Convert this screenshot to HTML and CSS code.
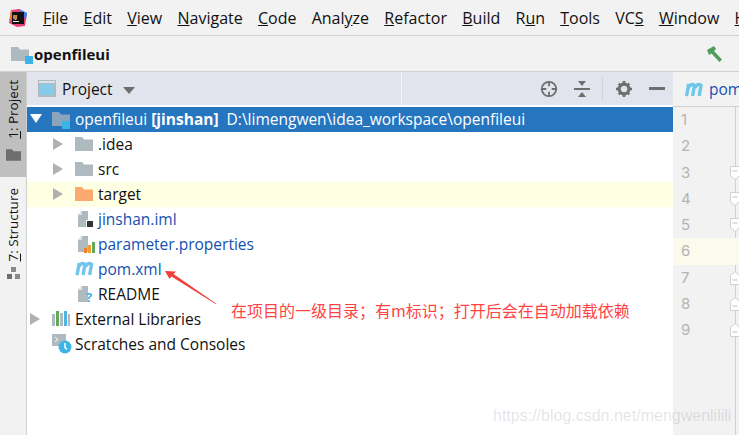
FILE: index.html
```html
<!DOCTYPE html>
<html lang="en">
<head>
  <meta charset="UTF-8">
  <title>openfileui</title>
  <link rel="stylesheet" href="styles.css">
</head>
<body>
  <svg class="sprite" width="0" height="0">
    <symbol id="folder" viewBox="0 0 18 16"><path d="M0 1h7l2 2.500h9V15H0z"/></symbol>
    <symbol id="file" viewBox="0 0 18 18"><path d="M1 5l4-4h6v16H1z" fill="#afb9c0"/><path d="M5 1v4H1z" fill="#dfe3e6"/></symbol>
    <symbol id="mvn" viewBox="0 0 20 16"><path d="M2 15L4.500 2M4 6Q7 1 10.500 3.500L8.500 15M11 6Q14 1 17.500 3.500L15.500 15" fill="none" stroke="#70c6ea" stroke-width="3.600"/></symbol>
    <symbol id="foldstart" viewBox="0 0 9 14"><path d="M.5.5h9v9l-4.500 4-4.500-4z" fill="#fff" stroke="#d0d0d0"/><path d="M2.500 5h5" stroke="#c0c0c0"/></symbol>
    <symbol id="foldend" viewBox="0 0 9 14"><path d="M.5 13.500h9v-9l-4.500-4-4.500 4z" fill="#fff" stroke="#d0d0d0"/><path d="M2.500 9h5" stroke="#c0c0c0"/></symbol>
  </svg>

  <div class="app">
    <div class="menubar">
      <svg class="logo" width="20" height="20" viewBox="0 0 20 20">
        <path d="M3 2l8-1 8 4-2 13-8 1-8-4z" fill="#e8407a"/>
        <path d="M11 1l8 4-1 7z" fill="#3f7fe8"/>
        <path d="M1 14l2-12 4 4z" fill="#f08030"/>
        <rect x="4" y="4" width="12" height="12" fill="#111"/>
        <rect x="5" y="13" width="6" height="1" fill="#eee"/>
        <text x="5" y="10.500" class="logotext">IJ</text>
      </svg>
      <nav class="menu">
        <span><u>F</u>ile</span>
        <span><u>E</u>dit</span>
        <span><u>V</u>iew</span>
        <span><u>N</u>avigate</span>
        <span><u>C</u>ode</span>
        <span>Anal<u>y</u>ze</span>
        <span><u>R</u>efactor</span>
        <span><u>B</u>uild</span>
        <span>R<u>u</u>n</span>
        <span><u>T</u>ools</span>
        <span>VC<u>S</u></span>
        <span><u>W</u>indow</span>
        <span><u>H</u>elp</span>
      </nav>
    </div>

    <div class="navbar">
      <span class="iconbox navfolder">
        <svg class="grey" width="18" height="16"><use href="#folder"/></svg>
        <i class="corner"></i>
      </span>
      <b>openfileui</b>
      <svg class="hammer" width="20" height="18" viewBox="0 0 18 18">
        <path d="M1 5L8 1l2 3-2 2 8 8.500-2.500 2.500-8-8.500-2.500 1.500z" fill="#4f9e5f"/>
      </svg>
    </div>

    <div class="main">
      <aside class="stripe">
        <div class="stripetab active">
          <span class="vtext"><u>1</u>: Project</span>
          <svg class="darkfolder" width="15" height="14"><use href="#folder"/></svg>
        </div>
        <div class="stripetab">
          <span class="vtext"><u>7</u>: Structure</span>
          <svg class="dots" width="13" height="12" viewBox="0 0 13 12">
            <rect x="4" y="0" width="5" height="5" fill="#8a8a8a"/>
            <rect x="0" y="7" width="5" height="5" fill="#6e6e6e"/>
            <rect x="8" y="7" width="5" height="5" fill="#8a8a8a"/>
          </svg>
        </div>
      </aside>

      <section class="project">
        <header class="projecthead">
          <div class="headleft">
            <svg class="viewicon" width="18" height="17" viewBox="0 0 18 17">
              <rect width="18" height="17" fill="#afb9c0"/>
              <rect x="1" y="1" width="16" height="2" fill="#dfe3e8"/>
              <rect x="2" y="4" width="14" height="11" fill="#86cce8"/>
            </svg>
            <span class="headtitle">Project</span>
            <i class="caret"></i>
          </div>
          <div class="headtools">
            <svg width="18" height="18" viewBox="0 0 20 20" fill="none" stroke="#6e6e6e" stroke-width="2">
              <circle cx="10" cy="10" r="8"/>
              <path d="M10 1v6M10 13v6M1 10h6M13 10h6"/>
            </svg>
            <svg width="18" height="18" viewBox="0 0 18 18" fill="#6e6e6e">
              <rect x="1" y="8" width="16" height="2"/>
              <path d="M5 1h8L9 6zM5 17h8L9 12z"/>
            </svg>
            <i class="toolsep"></i>
            <svg width="16" height="16" viewBox="0 0 18 18">
              <circle cx="9" cy="9" r="5.500" fill="none" stroke="#6e6e6e" stroke-width="3.500"/>
              <path d="M7.500 0h3v3h-3zM7.500 15h3v3h-3zM0 7.500h3v3H0zM15 7.500h3v3h-3zM2 4l2-2 2 2-2 2zM12 14l2-2 2 2-2 2zM2 14l2-2 2 2-2 2zM12 4l2-2 2 2-2 2z" fill="#6e6e6e"/>
            </svg>
            <i class="minus"></i>
          </div>
        </header>

        <ul class="tree">
          <li class="row selected">
            <i class="arrow down"></i>
            <span class="iconbox">
              <svg class="rootfolder" width="18" height="16"><use href="#folder"/></svg>
              <i class="corner"></i>
            </span>
            <span class="label">openfileui <b>[jinshan]</b><span class="path">D:\limengwen\idea_workspace\openfileui</span></span>
          </li>
          <li class="row nested">
            <i class="arrow"></i>
            <span class="iconbox"><svg class="grey" width="18" height="16"><use href="#folder"/></svg></span>
            <span class="label">.idea</span>
          </li>
          <li class="row nested">
            <i class="arrow"></i>
            <span class="iconbox"><svg class="grey" width="18" height="16"><use href="#folder"/></svg></span>
            <span class="label">src</span>
          </li>
          <li class="row nested ignored">
            <i class="arrow"></i>
            <span class="iconbox"><svg class="orange" width="18" height="16"><use href="#folder"/></svg></span>
            <span class="label">target</span>
          </li>
          <li class="row leaf">
            <span class="iconbox fileicon">
              <svg width="18" height="18"><use href="#file"/></svg>
              <i class="imlbadge"></i>
            </span>
            <span class="label blue">jinshan.iml</span>
          </li>
          <li class="row leaf">
            <span class="iconbox fileicon">
              <svg width="18" height="18" viewBox="0 0 18 18">
                <use href="#file"/>
                <rect x="7" y="13" width="3" height="5" fill="#f08030"/>
                <rect x="11" y="10" width="3" height="8" fill="#f0a030"/>
                <rect x="15" y="7" width="3" height="11" fill="#62a85a"/>
              </svg>
            </span>
            <span class="label blue">parameter.properties</span>
          </li>
          <li class="row leaf">
            <span class="iconbox"><svg width="19" height="15"><use href="#mvn"/></svg></span>
            <span class="label blue">pom.xml</span>
          </li>
          <li class="row leaf">
            <span class="iconbox fileicon">
              <svg width="18" height="18"><use href="#file"/></svg>
              <span class="question">?</span>
            </span>
            <span class="label">README</span>
          </li>
          <li class="row">
            <i class="arrow"></i>
            <span class="iconbox">
              <svg width="18" height="15" viewBox="0 0 18 15">
                <rect x="0" y="3" width="3" height="12" fill="#afb9c0"/>
                <rect x="4" y="0" width="3" height="15" fill="#62a85a"/>
                <rect x="8" y="2" width="3" height="13" fill="#afb9c0"/>
                <rect x="12" y="0" width="3" height="15" fill="#4fb4e0"/>
                <rect x="16" y="3" width="2" height="12" fill="#afb9c0"/>
              </svg>
            </span>
            <span class="label">External Libraries</span>
          </li>
          <li class="row leafroot">
            <span class="iconbox">
              <svg width="20" height="20" viewBox="0 0 20 20">
                <rect x="0" y="0" width="14" height="12" fill="#afb9c0"/>
                <path d="M3 3l3 2.500L3 8" fill="none" stroke="#fff"/>
                <circle cx="13" cy="13" r="6.500" fill="#3db4e6"/>
                <path d="M13 9v4.500l2 2" fill="none" stroke="#fff" stroke-width="1.500"/>
              </svg>
            </span>
            <span class="label">Scratches and Consoles</span>
          </li>
        </ul>
      </section>

      <section class="editor">
        <div class="editortab"><svg width="20" height="15"><use href="#mvn"/></svg><span class="tabname">pom.xml</span></div>
        <ol class="gutter">
          <li>1</li>
          <li>2</li>
          <li>3<svg class="fold" width="9" height="14"><use href="#foldstart"/></svg></li>
          <li>4<svg class="fold" width="9" height="14"><use href="#foldstart"/></svg></li>
          <li>5<svg class="fold" width="9" height="14"><use href="#foldstart"/></svg></li>
          <li class="caretline">6</li>
          <li>7<svg class="fold" width="9" height="14"><use href="#foldend"/></svg></li>
          <li>8<svg class="fold" width="9" height="14"><use href="#foldend"/></svg></li>
          <li>9<svg class="fold" width="9" height="14"><use href="#foldend"/></svg></li>
        </ol>
      </section>
    </div>

    <svg class="pointer" width="60" height="36" viewBox="0 0 60 36">
      <path d="M1 1l11 .500-2.500 2.500L52 33.500 51.500 34 7.500 6.500 5.500 9z" fill="#f0403c"/>
    </svg>
    <p class="note">在项目的一级目录；有m标识；打开后会在自动加载依赖</p>
    <p class="watermark">https://blog.csdn.net/mengwenlilili</p>
  </div>
</body>
</html>
```

FILE: styles.css
```css
*{
  box-sizing: border-box;
}
html, body{
  margin: 0;
  padding: 0;
}
body{
  font-family: "Open Sans", "Noto Sans", sans-serif;
  font-size: 15.500px;
  color: #111;
  background: #f2f2f2;
}
.sprite{
  display: block;
  height: 0;
}
ul, ol{
  list-style: none;
  margin: 0;
  padding: 0;
}
.app{
  position: relative;
  width: 739px;
  height: 435px;
  overflow: hidden;
}

/* menu */
.menubar{
  display: flex;
  align-items: center;
  height: 36px;
  padding-left: 8px;
  border-bottom: 1px solid #d0d0d0;
}
.logo{
  flex: none;
}
.logotext{
  font-size: 6px;
  font-weight: 700;
  fill: #fff;
}
.menu{
  display: flex;
  gap: 15.250px;
  margin-left: 15px;
  white-space: nowrap;
  font-size: 16px;
}

/* nav bar */
.navbar{
  display: flex;
  align-items: center;
  height: 36px;
  padding-left: 11px;
  border-bottom: 1px solid #d0d0d0;
}
.navbar b{
  font-size: 15px;
}
.navbar .navfolder{
  width: 23px;
}
.navfolder .corner{
  right: 1px;
  bottom: 0;
}
.hammer{
  margin-left: auto;
  margin-right: 14px;
}
.grey{ fill: #afb9c0; }
.orange{ fill: #fba96f; }
.rootfolder{ fill: #8aa4bb; }
.darkfolder{ fill: #6e6e6e; }

/* main */
.main{
  display: flex;
  height: 363px;
}
.stripe{
  flex: none;
  width: 27px;
  border-right: 1px solid #d0d0d0;
}
.stripetab{
  display: flex;
  flex-direction: column;
  align-items: center;
}
.stripetab.active{
  height: 105px;
  padding-top: 8px;
  background: #bfbfbf;
  margin-bottom: 11px;
}
.vtext{
  writing-mode: vertical-rl;
  transform: rotate(180deg);
  font-size: 13.500px;
  line-height: 17px;
}
.darkfolder{
  margin-top: 9px;
}
.dots{
  margin-top: 6px;
}

/* project panel */
.project{
  flex: none;
  width: 646px;
  background: #fff;
}
.projecthead{
  display: flex;
  align-items: center;
  height: 35px;
  background: #e1e4ec;
  border-bottom: 2px solid #fff;
}
.headleft{
  display: flex;
  align-items: center;
  flex: none;
  width: 375px;
  height: 100%;
  padding-left: 11px;
  border-right: 1px solid #f2f3f7;
}
.viewicon{
  flex: none;
}
.headtitle{
  margin-left: 6px;
}
.caret{
  width: 0;
  height: 0;
  margin-left: 10px;
  margin-top: 3px;
  border-left: 6px solid transparent;
  border-right: 6px solid transparent;
  border-top: 7px solid #6e6e6e;
}
.headtools{
  display: flex;
  align-items: center;
  gap: 15px;
  margin-left: auto;
  margin-right: 8px;
}
.toolsep{
  width: 1px;
  height: 24px;
  margin: 0 -2px 0 -4px;
  background: #d0d3da;
}
.minus{
  width: 16px;
  height: 3px;
  margin-left: 2px;
  background: #6e6e6e;
}
.row{
  display: flex;
  align-items: center;
  height: 25px;
  padding-left: 3px;
  padding-bottom: 2px;
  white-space: nowrap;
}
.row.nested{
  padding-left: 26px;
}
.row.leaf{
  padding-left: 48px;
}
.row.leafroot{
  padding-left: 25px;
}
.selected{
  background: #2675bf;
  color: #fff;
}
.selected b{
  font-weight: 700;
}
.ignored{
  background: #ffffe4;
}
.arrow{
  flex: none;
  width: 0;
  height: 0;
  margin-right: 12px;
  border-top: 6px solid transparent;
  border-bottom: 6px solid transparent;
  border-left: 10px solid #afb1b3;
}
.arrow.down{
  margin-right: 10px;
  border-left: 6px solid transparent;
  border-right: 6px solid transparent;
  border-bottom: 0;
  border-top: 9px solid #fff;
}
.iconbox{
  position: relative;
  display: flex;
  align-items: center;
  flex: none;
  width: 23px;
  height: 20px;
}
.fileicon{
  padding-left: 2px;
}
.fileicon svg{
  flex: none;
}
.corner{
  position: absolute;
  right: 5px;
  bottom: 0;
  width: 8px;
  height: 8px;
  background: #3db4e6;
}
.imlbadge{
  position: absolute;
  left: 11px;
  top: 11px;
  width: 8px;
  height: 8px;
  background: #333;
  border: 1px solid #fff;
}
.question{
  position: absolute;
  left: 11px;
  top: 4px;
  font-size: 13px;
  font-weight: 700;
  color: #3db4e6;
}
.blue{
  color: #1450b0;
}
.path{
  margin-left: 8px;
}

/* editor */
.editor{
  flex: 1;
  min-width: 0;
  overflow: hidden;
}
.editortab{
  display: flex;
  align-items: center;
  flex: none;
  gap: 5px;
  height: 35px;
  padding-left: 11px;
  white-space: nowrap;
  border-bottom: 1px solid #d0d0d0;
}
.editortab svg{
  flex: none;
}
.tabname{
  color: #1450b0;
}
.gutter{
  height: 328px;
  background: linear-gradient(#d0d0d0, #d0d0d0) 62px 0 / 1px 100% no-repeat;
}
.gutter li{
  position: relative;
  height: 26.250px;
  padding-left: 8px;
  font-family: "Inter", sans-serif;
  font-size: 15px;
  line-height: 26px;
  color: #b4b4b4;
}
.caretline{
  background: #fcfaed;
}
.fold{
  position: absolute;
  left: 57px;
  top: 6px;
}

/* annotation drawn over the screenshot */
.pointer{
  position: absolute;
  left: 164px;
  top: 270px;
}
.note{
  position: absolute;
  left: 231px;
  top: 299px;
  margin: 0;
  font-family: "Noto Sans CJK SC", sans-serif;
  font-size: 16px;
  line-height: 22px;
  white-space: nowrap;
  color: #ff4444;
}
.watermark{
  position: absolute;
  left: 493px;
  top: 405px;
  margin: 0;
  font-family: "Liberation Sans", sans-serif;
  font-size: 16px;
  line-height: 22px;
  white-space: nowrap;
  color: rgba(120, 120, 120, .2);
}
```
